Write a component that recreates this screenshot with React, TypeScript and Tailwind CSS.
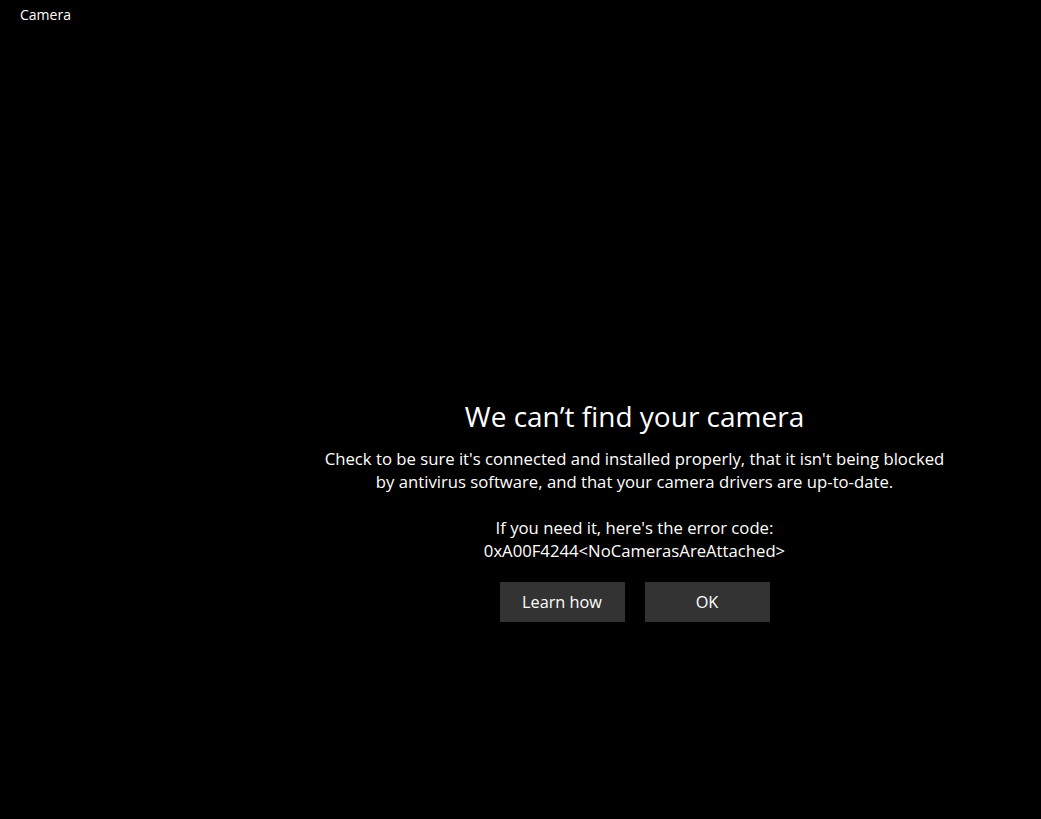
import React from "react";

const FONT = { fontFamily: '"Segoe UI", "Open Sans", "Noto Sans", sans-serif' };

export default function App() {
  return (
    <div
      className="w-[1041px] h-[819px] bg-black text-white flex flex-col overflow-hidden"
      style={FONT}
    >
      {/* Title bar */}
      <div className="h-[32px] flex-none pl-[20px] pt-[5px] text-[14px] leading-[20px]">
        Camera
      </div>

      {/* Error message */}
      <div className="flex-1 flex flex-col items-center pl-[228px] pt-[364px]">
        <h1 className="text-[28px] leading-[40px] font-normal">
          We can’t find your camera
        </h1>
        <p className="mt-[11px] text-[16.7px] leading-[23px] text-center">
          Check to be sure it's connected and installed properly, that it isn't being blocked
          <br />
          by antivirus software, and that your camera drivers are up-to-date.
        </p>
        <p className="mt-[23px] text-[16.7px] leading-[23px] text-center">
          If you need it, here's the error code:
          <br />
          0xA00F4244&lt;NoCamerasAreAttached&gt;
        </p>
        <div className="mt-[20px] flex gap-[20px]">
          <button className="w-[125px] h-[40px] bg-[#333333] text-[16.3px]">Learn how</button>
          <button className="w-[125px] h-[40px] bg-[#333333] text-[16.3px]">OK</button>
        </div>
      </div>
    </div>
  );
}
